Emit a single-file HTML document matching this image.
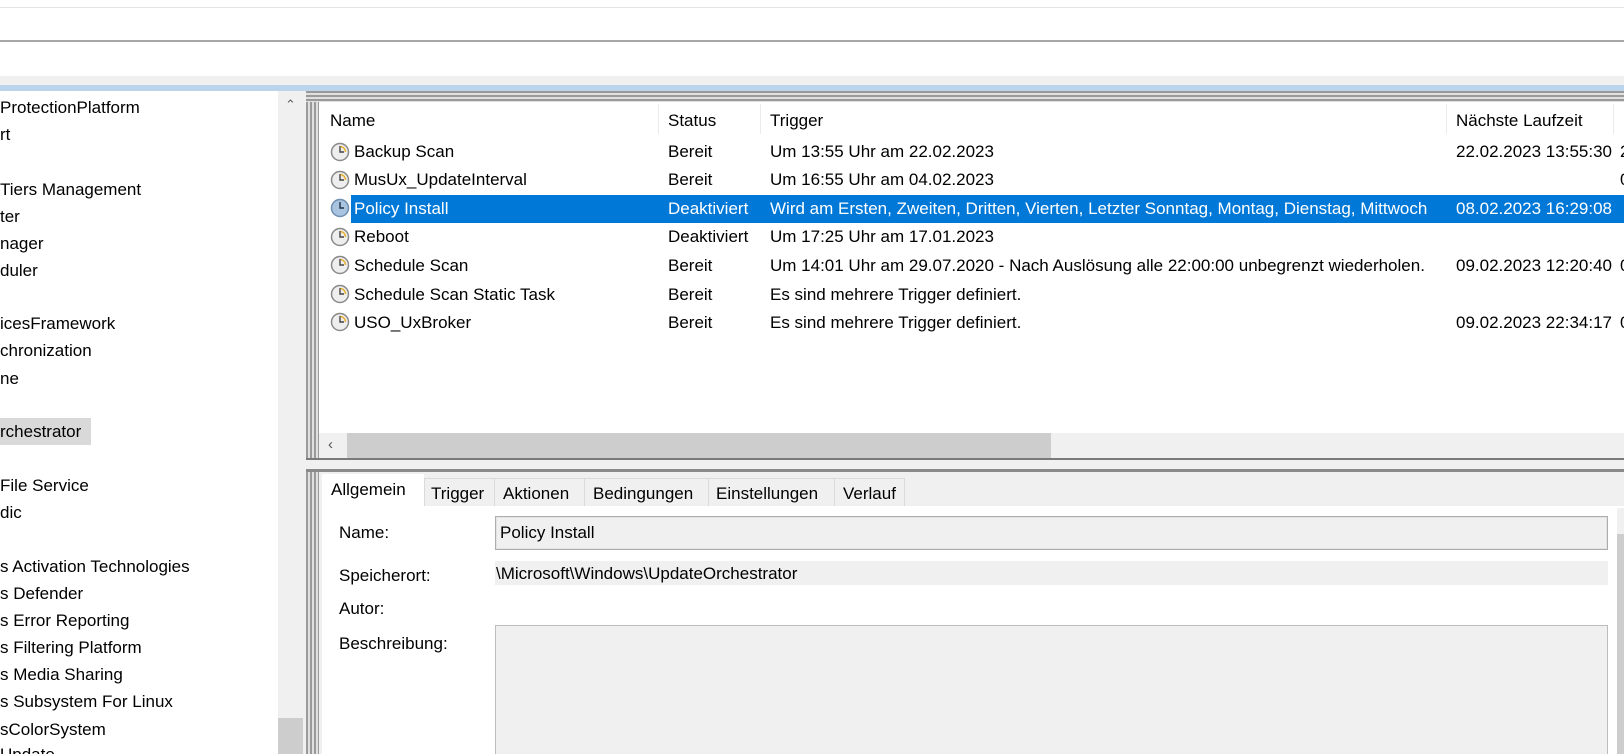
<!DOCTYPE html>
<html><head><meta charset="utf-8"><style>
*{margin:0;padding:0;box-sizing:border-box}
html,body{width:1624px;height:754px;overflow:hidden}
body{background:#fff;font-family:"Liberation Sans",sans-serif;font-size:17px;color:#000;position:relative}
.a{position:absolute;white-space:nowrap}
.t{position:absolute;white-space:nowrap;line-height:20px}
</style></head><body>
<div class="a" style="left:0;top:7px;width:1624px;height:1px;background:#e4e4e4"></div>
<div class="a" style="left:0;top:40px;width:1624px;height:2px;background:#a8a8a8"></div>
<div class="a" style="left:0;top:76px;width:1624px;height:9px;background:#f0f0f0"></div>
<div class="a" style="left:0;top:85px;width:1624px;height:6px;background:#bcd3ec"></div>

<div class="a" style="left:0;top:418px;width:91px;height:27px;background:#d9d9d9"></div>
<div class="t" style="left:0;top:98px">ProtectionPlatform</div>
<div class="t" style="left:0;top:125px">rt</div>
<div class="t" style="left:0;top:180px">Tiers Management</div>
<div class="t" style="left:0;top:207px">ter</div>
<div class="t" style="left:0;top:234px">nager</div>
<div class="t" style="left:0;top:261px">duler</div>
<div class="t" style="left:0;top:314px">icesFramework</div>
<div class="t" style="left:0;top:341px">chronization</div>
<div class="t" style="left:0;top:369px">ne</div>
<div class="t" style="left:0;top:422px">rchestrator</div>
<div class="t" style="left:0;top:476px">File Service</div>
<div class="t" style="left:0;top:503px">dic</div>
<div class="t" style="left:0;top:557px">s Activation Technologies</div>
<div class="t" style="left:0;top:584px">s Defender</div>
<div class="t" style="left:0;top:611px">s Error Reporting</div>
<div class="t" style="left:0;top:638px">s Filtering Platform</div>
<div class="t" style="left:0;top:665px">s Media Sharing</div>
<div class="t" style="left:0;top:692px">s Subsystem For Linux</div>
<div class="t" style="left:0;top:720px">sColorSystem</div>
<div class="a" style="left:0;top:745px;width:200px;height:9px;overflow:hidden"><div class="t" style="left:0;top:0">Update</div></div>

<div class="a" style="left:278px;top:91px;width:25px;height:663px;background:#f0f0f0"></div>
<div class="a" style="left:278px;top:718px;width:25px;height:36px;background:#cdcdcd"></div>
<div class="a" style="left:285px;top:97px;font-size:13px;color:#606060">&#8963;</div>
<div class="a" style="left:303px;top:91px;width:3px;height:663px;background:#f0f0f0"></div>
<div class="a" style="left:306px;top:91px;width:13px;height:663px;background:repeating-linear-gradient(90deg,#9a9a9a 0 2px,#e0e0e0 2px 4px)"></div>
<div class="a" style="left:306px;top:91px;width:1318px;height:11px;background:repeating-linear-gradient(180deg,#9a9a9a 0 2px,#e0e0e0 2px 4px)"></div>

<div class="a" style="left:319px;top:102px;width:1305px;height:331px;background:#fff"></div>
<div class="a" style="left:658px;top:104px;width:1px;height:30px;background:#eaeaea"></div>
<div class="a" style="left:760px;top:104px;width:1px;height:30px;background:#eaeaea"></div>
<div class="a" style="left:1446px;top:104px;width:1px;height:30px;background:#eaeaea"></div>
<div class="a" style="left:1613px;top:104px;width:1px;height:30px;background:#eaeaea"></div>
<div class="t" style="left:330px;top:111px">Name</div>
<div class="t" style="left:668px;top:111px">Status</div>
<div class="t" style="left:770px;top:111px">Trigger</div>
<div class="t" style="left:1456px;top:111px">Nächste Laufzeit</div>
<div class="a" style="left:351px;top:195px;width:1273px;height:28px;background:#0078d7"></div>

<svg class="a" style="left:330px;top:140px" width="20" height="200">
<defs><g id="c"><circle cx="10" cy="10" r="8.5" fill="#eee" stroke="#8a8a8a" stroke-width="1.5"/><path d="M10 4v6h4" stroke="#444" stroke-width="1.4" fill="none"/><path d="M10.5 4.5a5.5 5.5 0 0 1 5 5.5" stroke="#e8b030" stroke-width="1.5" fill="none"/></g>
<g id="d"><circle cx="10" cy="10" r="8.5" fill="#a9c4e0" stroke="#6f8fb0" stroke-width="1.5"/><path d="M10 4v6h4" stroke="#234" stroke-width="1.4" fill="none"/></g></defs>
<use href="#c" x="0" y="2"/><use href="#c" x="0" y="30"/><use href="#d" x="0" y="58"/><use href="#c" x="0" y="87"/><use href="#c" x="0" y="115"/><use href="#c" x="0" y="144"/><use href="#c" x="0" y="172"/>
</svg>
<div class="t" style="left:354px;top:142px">Backup Scan</div><div class="t" style="left:668px;top:142px">Bereit</div><div class="t" style="left:770px;top:142px">Um 13:55 Uhr am 22.02.2023</div><div class="t" style="left:1456px;top:142px">22.02.2023 13:55:30</div>
<div class="t" style="left:354px;top:170px">MusUx_UpdateInterval</div><div class="t" style="left:668px;top:170px">Bereit</div><div class="t" style="left:770px;top:170px">Um 16:55 Uhr am 04.02.2023</div>
<div class="t" style="left:354px;top:199px;color:#fff">Policy Install</div><div class="t" style="left:668px;top:199px;color:#fff">Deaktiviert</div><div class="t" style="left:770px;top:199px;color:#fff;width:664px;overflow:hidden;text-overflow:ellipsis">Wird am Ersten, Zweiten, Dritten, Vierten, Letzter Sonntag, Montag, Dienstag, Mittwoch</div><div class="t" style="left:1456px;top:199px;color:#fff">08.02.2023 16:29:08</div>
<div class="t" style="left:354px;top:227px">Reboot</div><div class="t" style="left:668px;top:227px">Deaktiviert</div><div class="t" style="left:770px;top:227px">Um 17:25 Uhr am 17.01.2023</div>
<div class="t" style="left:354px;top:256px">Schedule Scan</div><div class="t" style="left:668px;top:256px">Bereit</div><div class="t" style="left:770px;top:256px;width:670px;overflow:hidden">Um 14:01 Uhr am 29.07.2020 - Nach Auslösung alle 22:00:00 unbegrenzt wiederholen.</div><div class="t" style="left:1456px;top:256px">09.02.2023 12:20:40</div>
<div class="t" style="left:354px;top:285px">Schedule Scan Static Task</div><div class="t" style="left:668px;top:285px">Bereit</div><div class="t" style="left:770px;top:285px">Es sind mehrere Trigger definiert.</div>
<div class="t" style="left:354px;top:313px">USO_UxBroker</div><div class="t" style="left:668px;top:313px">Bereit</div><div class="t" style="left:770px;top:313px">Es sind mehrere Trigger definiert.</div><div class="t" style="left:1456px;top:313px">09.02.2023 22:34:17</div>
<div class="t" style="left:1620px;top:142px">2</div><div class="t" style="left:1620px;top:170px">0</div><div class="t" style="left:1620px;top:256px">0</div><div class="t" style="left:1620px;top:313px">0</div>

<div class="a" style="left:319px;top:433px;width:1305px;height:25px;background:#f0f0f0"></div>
<div class="a" style="left:347px;top:433px;width:704px;height:25px;background:#cdcdcd"></div>
<div class="a" style="left:328px;top:436px;font-size:15px;color:#555">&#8249;</div>
<div class="a" style="left:306px;top:458px;width:1318px;height:2px;background:#7a7a7a"></div>
<div class="a" style="left:306px;top:460px;width:1318px;height:10px;background:#f0f0f0"></div>
<div class="a" style="left:306px;top:469px;width:1318px;height:3px;background:#8a8a8a"></div>

<div class="a" style="left:319px;top:472px;width:1305px;height:282px;background:#f0f0f0"></div>
<div class="a" style="left:322px;top:506px;width:1302px;height:248px;background:#fff"></div>
<div class="a" style="left:322px;top:474px;width:102px;height:34px;background:#fff"></div>
<div class="a" style="left:424px;top:478px;width:481px;height:28px;border:1px solid #dadada;border-bottom:none;background:#f0f0f0"></div>
<div class="a" style="left:494px;top:478px;width:1px;height:28px;background:#dadada"></div>
<div class="a" style="left:584px;top:478px;width:1px;height:28px;background:#dadada"></div>
<div class="a" style="left:708px;top:478px;width:1px;height:28px;background:#dadada"></div>
<div class="a" style="left:834px;top:478px;width:1px;height:28px;background:#dadada"></div>
<div class="t" style="left:331px;top:480px">Allgemein</div>
<div class="t" style="left:431px;top:484px">Trigger</div>
<div class="t" style="left:503px;top:484px">Aktionen</div>
<div class="t" style="left:593px;top:484px">Bedingungen</div>
<div class="t" style="left:716px;top:484px">Einstellungen</div>
<div class="t" style="left:843px;top:484px">Verlauf</div>
<div class="a" style="left:1617px;top:508px;width:7px;height:246px;background:#f0f0f0"></div>
<div class="a" style="left:1617px;top:534px;width:7px;height:220px;background:#cdcdcd"></div>

<div class="t" style="left:339px;top:523px">Name:</div>
<div class="t" style="left:339px;top:566px">Speicherort:</div>
<div class="t" style="left:339px;top:599px">Autor:</div>
<div class="t" style="left:339px;top:634px">Beschreibung:</div>
<div class="a" style="left:495px;top:516px;width:1113px;height:34px;background:#f0f0f0;border:1px solid #adadad;box-shadow:inset 0 0 0 1px #e3e3e3"></div>
<div class="t" style="left:500px;top:523px">Policy Install</div>
<div class="a" style="left:495px;top:561px;width:1113px;height:24px;background:#f0f0f0"></div>
<div class="t" style="left:496px;top:564px">\Microsoft\Windows\UpdateOrchestrator</div>
<div class="a" style="left:495px;top:625px;width:1113px;height:129px;background:#f0f0f0;border:1px solid #bdbdbd;border-bottom:none"></div>
</body></html>
